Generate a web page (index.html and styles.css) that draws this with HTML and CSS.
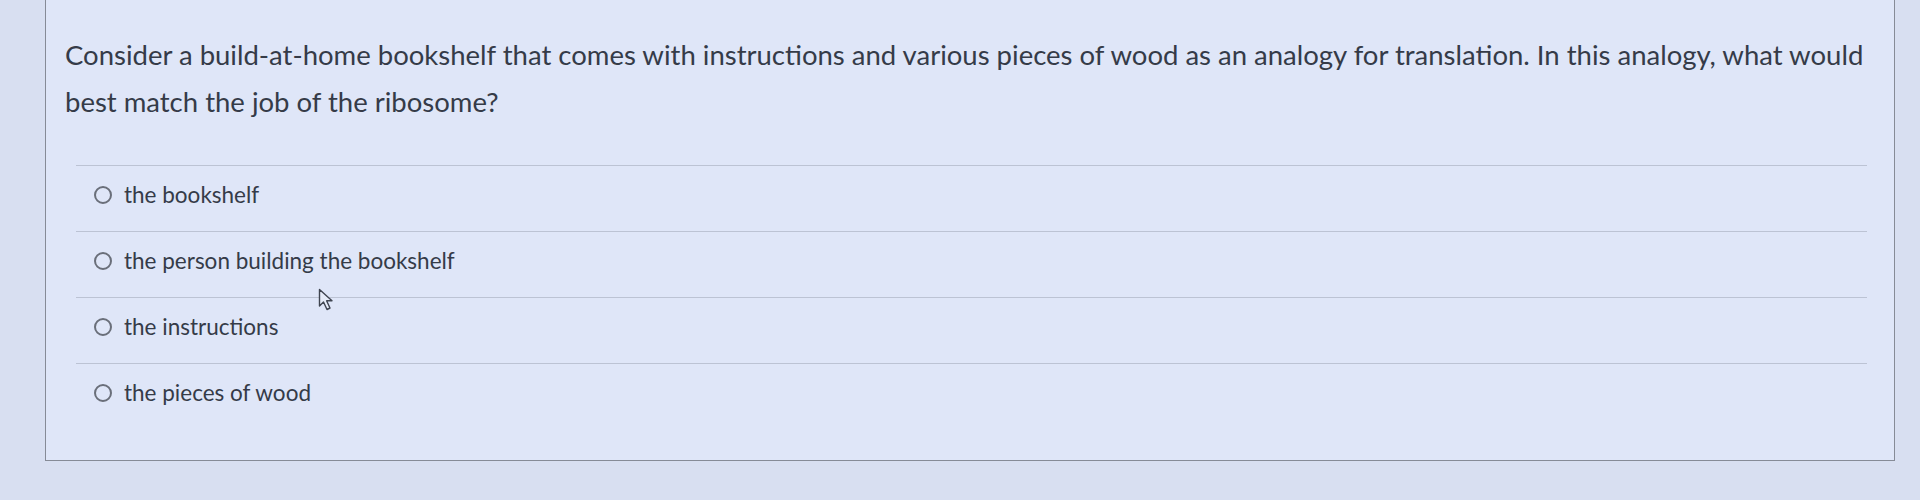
FILE: index.html
```html
<!DOCTYPE html>
<html lang="en">
<head>
<meta charset="utf-8">
<title>Question</title>
<link rel="stylesheet" href="styles.css">
</head>
<body>
<main class="page">
  <section class="card">
    <p class="question">Consider a build-at-home bookshelf that comes with instructions and various pieces of wood as an analogy for translation. In this analogy, what would best match the job of the ribosome?</p>
    <ul class="options">
      <li class="option"><span class="radio"></span><span class="label">the bookshelf</span></li>
      <li class="option"><span class="radio"></span><span class="label">the person building the bookshelf</span></li>
      <li class="option"><span class="radio"></span><span class="label">the instructions</span></li>
      <li class="option"><span class="radio"></span><span class="label">the pieces of wood</span></li>
    </ul>
  </section>
  <svg class="cursor" width="18" height="24" viewBox="0 0 18 24" aria-hidden="true">
    <path d="M1.5 1.5 L1.5 18 L5.5 14 L9 21.5 L12 20 L8.6 12.8 L14 12.8 Z" fill="#e6ebf8" stroke="#3f4450" stroke-width="1.4" stroke-linejoin="round"/>
  </svg>
</main>
</body>
</html>
```
FILE: styles.css
```css
html, body {
  margin: 0;
  padding: 0;
}
body {
  background: #d8dff1;
  font-family: "Lato", "Open Sans", sans-serif;
  color: #353b48;
  height: 500px;
  overflow: hidden;
}
.page {
  position: relative;
  padding: 0 25px 0 45px;
}
.card {
  background: #dfe6f8;
  border: 1px solid #868b97;
  border-top: none;
  padding: 31px 10px 31px 19px;
}
.question {
  margin: 0;
  font-size: 27.5px;
  line-height: 47px;
}
.options {
  list-style: none;
  margin: 40px 17px 0 11px;
  padding: 0;
}
.option {
  display: flex;
  align-items: center;
  height: 66px;
  box-sizing: border-box;
  border-top: 1px solid #bcc3d4;
  padding: 0 0 8px 18px;
  gap: 12px;
}
.radio {
  width: 18px;
  height: 18px;
  border: 2px solid #6a6f7a;
  border-radius: 50%;
  box-sizing: border-box;
  flex: none;
}
.label {
  font-size: 22.5px;
  line-height: 26px;
  color: #353b48;
}
.cursor {
  position: absolute;
  left: 318px;
  top: 288px;
}
```
